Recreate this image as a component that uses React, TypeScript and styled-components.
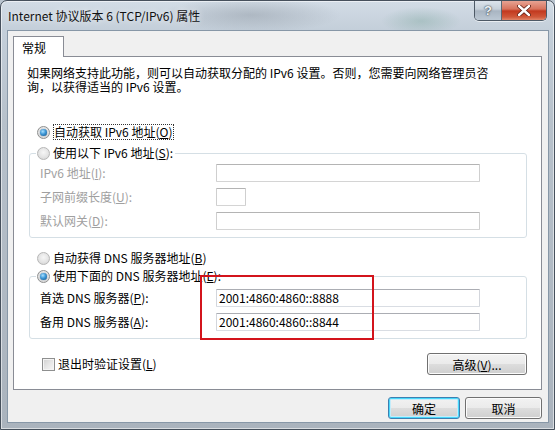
import React from "react";
import styled, { createGlobalStyle, css } from "styled-components";

const GlobalStyle = createGlobalStyle`
  html, body {
    margin: 0;
    padding: 0;
    background: #b9c4cf;
  }
  body {
    font-family: "Noto Sans CJK SC", "Noto Sans", sans-serif;
    font-size: 12px;
    color: #000;
  }
`;

const UI_FONT = `"Noto Sans CJK SC", "Noto Sans", sans-serif`;

type RadioProps = { $checked?: boolean; $dim?: boolean };

const App = () => {
  return (
    <>
      <GlobalStyle />
      <Window>
        <TitleBar>
          <Title>Internet 协议版本 6 (TCP/IPv6) 属性</Title>
          <CaptionButtons>
            <HelpButton>?</HelpButton>
            <CloseButton>
              <svg width="14" height="11" viewBox="0 0 14 11">
                <path
                  d="M2 1 L12 10 M12 1 L2 10"
                  stroke="#5a1a10"
                  strokeWidth="4"
                  strokeLinecap="round"
                />
                <path
                  d="M2 1 L12 10 M12 1 L2 10"
                  stroke="#fff"
                  strokeWidth="2.4"
                  strokeLinecap="round"
                />
              </svg>
            </CloseButton>
          </CaptionButtons>
        </TitleBar>

        <Client>
          <TabStrip>
            <Tab>常规</Tab>
          </TabStrip>
          <Panel>
            <Description>
              <DescLine>
                如果网络支持此功能，则可以自动获取分配的 IPv6 设置。否则，您需要向网络管理员咨
              </DescLine>
              <DescLine>询，以获得适当的 IPv6 设置。</DescLine>
            </Description>

            <OptionRow>
              <Radio $checked />
              <FocusLabel>
                自动获取 IPv6 地址(<u>O</u>)
              </FocusLabel>
            </OptionRow>

            <Group $gap={5}>
              <Legend>
                <Radio $dim />
                <span>
                  使用以下 IPv6 地址(<u>S</u>):
                </span>
              </Legend>
              <FieldGrid $top={3}>
                <FieldLabel $disabled>
                  IPv6 地址(<u>I</u>):
                </FieldLabel>
                <TextBox $disabled />
                <FieldLabel $disabled>
                  子网前缀长度(<u>U</u>):
                </FieldLabel>
                <TextBox $disabled $small />
                <FieldLabel $disabled>
                  默认网关(<u>D</u>):
                </FieldLabel>
                <TextBox $disabled />
              </FieldGrid>
            </Group>

            <OptionRow $gap={12}>
              <Radio $dim />
              <span>
                自动获得 DNS 服务器地址(<u>B</u>)
              </span>
            </OptionRow>

            <Group $gap={2}>
              <Legend>
                <Radio $checked />
                <span>
                  使用下面的 DNS 服务器地址(<u>E</u>):
                </span>
              </Legend>
              <FieldGrid $top={5}>
                <FieldLabel>
                  首选 DNS 服务器(<u>P</u>):
                </FieldLabel>
                <TextBox>2001:4860:4860::8888</TextBox>
                <FieldLabel>
                  备用 DNS 服务器(<u>A</u>):
                </FieldLabel>
                <TextBox>2001:4860:4860::8844</TextBox>
              </FieldGrid>
            </Group>

            <FooterRow>
              <CheckRow>
                <CheckBox />
                <span>
                  退出时验证设置(<u>L</u>)
                </span>
              </CheckRow>
              <PushButton $width={100}>
                高级(<u>V</u>)...
              </PushButton>
            </FooterRow>
          </Panel>

          <DialogButtons>
            <PushButton $width={72} $default>
              确定
            </PushButton>
            <PushButton $width={77}>取消</PushButton>
          </DialogButtons>
        </Client>

        {/* red marker drawn round the DNS entries */}
        <Marker />
      </Window>
    </>
  );
};

export default App;

const Window = styled.div`
  position: relative;
  width: 555px;
  height: 430px;
  box-sizing: border-box;
  display: flex;
  flex-direction: column;
  border: 1px solid #46505c;
  border-radius: 7px 7px 0 0;
  background:
    radial-gradient(ellipse 90px 18px at 250px 14px, rgba(120, 130, 140, 0.35), transparent),
    radial-gradient(ellipse 40px 14px at 420px 20px, rgba(80, 140, 120, 0.25), transparent),
    linear-gradient(to bottom, #d2dce6 0px, #c4cfda 28px, #b7c1cb 120px, #aab3bd 100%);
  box-shadow: inset 0 0 0 1px rgba(255, 255, 255, 0.55);
  overflow: hidden;
`;

const TitleBar = styled.div`
  height: 29px;
  display: flex;
  justify-content: space-between;
  align-items: flex-start;
  padding-left: 7px;
`;

const Title = styled.div`
  font-family: ${UI_FONT};
  font-size: 12px;
  line-height: 29px;
  color: #111;
  text-shadow: 0 0 6px rgba(255, 255, 255, 0.9);
`;

const CaptionButtons = styled.div`
  display: flex;
  margin-right: 7px;
  margin-top: -1px;
  border: 1px solid #4d5966;
  border-top: none;
  border-radius: 0 0 5px 5px;
  overflow: hidden;
  box-shadow: 0 1px 0 rgba(255, 255, 255, 0.6);
`;

const HelpButton = styled.div`
  width: 26px;
  height: 20px;
  display: flex;
  align-items: center;
  justify-content: center;
  font-family: "Liberation Sans", sans-serif;
  font-size: 13px;
  font-weight: bold;
  color: #eef2f6;
  text-shadow: 0 0 2px #36414c, 0 0 1px #36414c;
  background: linear-gradient(to bottom, #dfe6ee 0%, #c6d0da 45%, #a9b5c2 55%, #bcc8d4 100%);
  border-right: 1px solid #5c6874;
`;

const CloseButton = styled.div`
  width: 44px;
  height: 20px;
  display: flex;
  align-items: center;
  justify-content: center;
  background: linear-gradient(to bottom, #e9a99a 0%, #d8735d 45%, #c2391f 55%, #d0583a 85%, #e0866a 100%);
`;

const Client = styled.div`
  flex: 1;
  margin: 0 5px 6px 6px;
  padding: 5px 6px 0 5px;
  background: #f0f0f0;
  border: 1px solid #8797a7;
  display: flex;
  flex-direction: column;
`;

const TabStrip = styled.div`
  display: flex;
  height: 20px;
`;

const Tab = styled.div`
  position: relative;
  z-index: 1;
  width: 51px;
  height: 21px;
  box-sizing: border-box;
  padding-left: 8px;
  line-height: 21px;
  background: #fff;
  border: 1px solid #898c95;
  border-bottom: none;
`;

const Panel = styled.div`
  height: 334px;
  box-sizing: border-box;
  background: #fff;
  border: 1px solid #898c95;
  padding: 0 14px 0 13px;
  display: flex;
  flex-direction: column;
`;

const Description = styled.div`
  margin-top: 9px;
  display: flex;
  flex-direction: column;
`;

const DescLine = styled.div`
  height: 14px;
  line-height: 14px;
  white-space: nowrap;
`;

const OptionRow = styled.div<{ $gap?: number }>`
  margin-top: ${(p) => p.$gap ?? 30}px;
  margin-left: 10px;
  height: 16px;
  display: flex;
  align-items: center;
  gap: 3px;
  line-height: 16px;
`;

const FocusLabel = styled.span`
  padding: 0 2px 0 1px;
  outline: 1px dotted #333;
  outline-offset: -1px;
`;

const radioOn = css`
  &::after {
    content: "";
    position: absolute;
    left: 2px;
    top: 2px;
    width: 7px;
    height: 7px;
    border-radius: 50%;
    background: radial-gradient(circle at 40% 35%, #a9e0ff 0%, #3d97d6 45%, #0f4f86 100%);
    box-shadow: 0 0 1px #0b3a66;
  }
`;

const Radio = styled.span<RadioProps>`
  position: relative;
  flex: none;
  width: 13px;
  height: 13px;
  box-sizing: border-box;
  border-radius: 50%;
  border: 1px solid ${(p) => (p.$dim ? "#b6b6b6" : "#8e8f8f")};
  background: radial-gradient(circle at 50% 40%, #f6f6f6 0%, #e4e4e4 55%, #cfcfcf 100%);
  ${(p) => p.$checked && radioOn}
`;

const Group = styled.fieldset<{ $gap: number }>`
  margin: ${(p) => p.$gap}px 0 0 2px;
  padding: 0;
  min-width: 0;
  border: 1px solid #d5dfe5;
  border-radius: 3px;
`;

const Legend = styled.legend`
  margin-left: 6px;
  padding: 0 2px 0 1px;
  height: 16px;
  display: flex;
  align-items: center;
  gap: 3px;
  line-height: 16px;
`;

const FieldGrid = styled.div<{ $top: number }>`
  display: grid;
  grid-template-columns: 176px 264px;
  row-gap: 6px;
  align-items: center;
  padding: ${(p) => p.$top}px 0 7px 10px;
`;

const FieldLabel = styled.span<{ $disabled?: boolean }>`
  line-height: 18px;
  color: ${(p) => (p.$disabled ? "#a0a0a0" : "#000")};
`;

const TextBox = styled.div<{ $disabled?: boolean; $small?: boolean }>`
  width: ${(p) => (p.$small ? "30px" : "264px")};
  height: 18px;
  box-sizing: border-box;
  padding-left: 2px;
  line-height: 16px;
  font-size: 12px;
  background: #fff;
  border: 1px solid;
  border-color: #abadb3 #d3d6dc #d9dde3 #d3d6dc;
  border-radius: 1px;
  ${(p) =>
    p.$disabled &&
    css`
      border-color: #b4b4b4 #cfcfcf #d4d4d4 #cfcfcf;
    `}
`;

const FooterRow = styled.div`
  margin-top: 14px;
  display: flex;
  justify-content: space-between;
  align-items: center;
`;

const CheckRow = styled.div`
  margin-left: 15px;
  display: flex;
  align-items: center;
  gap: 3px;
  line-height: 16px;
`;

const CheckBox = styled.span`
  width: 13px;
  height: 13px;
  box-sizing: border-box;
  border: 1px solid #8e8f8f;
  background: linear-gradient(135deg, #d0d0d0 0%, #e6e6e6 50%, #f7f7f7 100%);
  box-shadow: inset 0 0 0 1px #f4f4f4;
`;

const PushButton = styled.button<{ $width: number; $default?: boolean }>`
  width: ${(p) => p.$width}px;
  height: 22px;
  padding: 0;
  font-family: ${UI_FONT};
  font-size: 12px;
  color: #000;
  border-radius: 3px;
  border: 1px solid #707070;
  background: linear-gradient(to bottom, #f2f2f2 0%, #ebebeb 48%, #dddddd 52%, #cfcfcf 100%);
  box-shadow: inset 0 0 0 1px #fcfcfc;
  ${(p) =>
    p.$default &&
    css`
      border-color: #3c7fb1;
      box-shadow: inset 0 0 0 1px #48d8fb, inset 0 0 0 2px #c4ecfa;
    `}
`;

const DialogButtons = styled.div`
  margin-top: 7px;
  display: flex;
  justify-content: flex-end;
  gap: 5px;
  padding-right: 0;
`;

const Marker = styled.div`
  position: absolute;
  left: 199px;
  top: 274px;
  width: 174px;
  height: 65px;
  box-sizing: border-box;
  border: 2px solid #d3141c;
  pointer-events: none;
`;
